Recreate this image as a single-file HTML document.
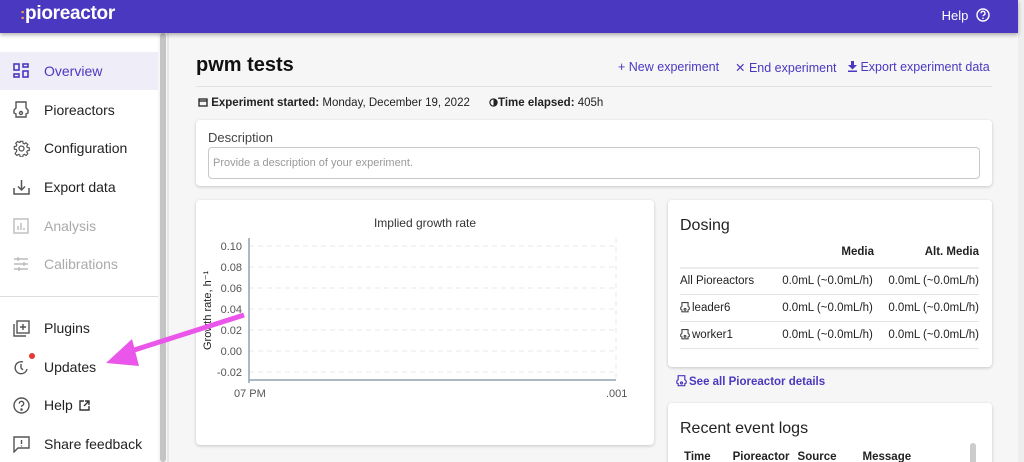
<!DOCTYPE html>
<html><head><style>
*{box-sizing:border-box;margin:0;padding:0}
html,body{width:1024px;height:462px;overflow:hidden}
body{background:#f6f6f6;font-family:"Liberation Sans",sans-serif;position:relative;color:#222}
.hdr{position:absolute;left:0;top:0;width:1018px;height:33px;background:#4b38c0;box-shadow:0 2px 4px rgba(0,0,0,.3);z-index:3}
.logo{position:absolute;left:20px;top:3px;color:#fff;font-size:19px;font-weight:bold;letter-spacing:-0.3px}
.help{position:absolute;right:28px;top:8px;color:#fff;font-size:13px}
.side{position:absolute;left:0;top:33px;width:158px;height:429px;background:#fff}
.item{position:absolute;left:0;width:158px;height:38px;display:flex;align-items:center;font-size:14px;color:#222}
.item .ic{position:absolute;left:13px}
.item span{position:absolute;left:44px}
.sb{position:absolute;left:160px;top:33px;width:6px;height:429px;background:#c4c4c4;border-radius:3px}
.dv{position:absolute;left:167px;top:33px;width:2px;height:429px;background:#e6e6e6}
.rs{position:absolute;left:1018px;top:0;width:6px;height:462px;background:#eee}
.card{position:absolute;background:#fff;border-radius:4px;box-shadow:0 1px 3px rgba(0,0,0,.2)}
.lk{color:#4b38c0;font-size:12.5px;position:absolute;top:60px}
td{font-size:11.5px;padding:0}
.pr{vertical-align:-2px;margin-right:2px}
</style></head><body>
<div class="hdr"><div class="logo"><span style="color:#f7a24a;font-size:16px">:</span>pioreactor</div>
<div class="help">Help <svg width="14" height="14" viewBox="0 0 14 14" style="vertical-align:-2px;margin-left:4px"><circle cx="7" cy="7" r="6" fill="none" stroke="#fff" stroke-width="1.4"/><path d="M5 5.3a2 2 0 1 1 2.6 1.9c-.5.2-.6.5-.6 1.1" fill="none" stroke="#fff" stroke-width="1.3"/><circle cx="7" cy="10.2" r=".8" fill="#fff"/></svg></div></div>
<div class="side">
<div class="item" style="top:19px;background:#efedf8;color:#4b38c0"><svg class="ic" width="16" height="16" viewBox="0 0 16 16" fill="none" stroke="#4b38c0" stroke-width="1.6"><rect x="1" y="1" width="5" height="6"/><rect x="10" y="1" width="5" height="3"/><rect x="1" y="11" width="5" height="3"/><rect x="10" y="8" width="5" height="6"/></svg><span>Overview</span></div>
<div class="item" style="top:58px"><svg class="ic" width="16" height="18" viewBox="0 0 16 18" fill="none" stroke="#555" stroke-width="1.4"><path d="M3 1h10v6l2 2v3l-2 1v3H3v-3l-2-1V9l2-2z"/><circle cx="8" cy="12" r="1.5"/></svg><span>Pioreactors</span></div>
<div class="item" style="top:96px"><svg class="ic" width="17" height="17" viewBox="0 0 24 24" fill="none" stroke="#555" stroke-width="1.8"><circle cx="12" cy="12" r="3.5"/><path d="M10 2h4l.5 3 2 1 2.5-1.8 2.8 2.8L20 9.5l1 2 3 .5v4l-3 .5-1 2 1.8 2.5-2.8 2.8-2.5-1.8-2 1-.5 3h-4l-.5-3-2-1-2.5 1.8-2.8-2.8L5 16.5l-1-2-3-.5v-4l3-.5 1-2L3.2 5 6 2.2 8.5 4l2-1z" transform="scale(.92) translate(1,0)"/></svg><span>Configuration</span></div>
<div class="item" style="top:135px"><svg class="ic" width="17" height="16" viewBox="0 0 17 16" fill="none" stroke="#555" stroke-width="1.5"><path d="M1 9v6h15V9M8.5 1v10M5 7.5l3.5 3.5 3.5-3.5"/></svg><span>Export data</span></div>
<div class="item" style="top:174px;color:#aaa"><svg class="ic" width="16" height="16" viewBox="0 0 16 16" fill="none" stroke="#bbb" stroke-width="1.4"><rect x="1" y="1" width="14" height="14"/><path d="M5 12V8M8 12V5M11 12v-2"/></svg><span>Analysis</span></div>
<div class="item" style="top:212px;color:#aaa"><svg class="ic" width="16" height="16" viewBox="0 0 16 16" fill="none" stroke="#bbb" stroke-width="1.4"><path d="M1 3h14M1 8h14M1 13h14M5 1v4M11 6v4M6 11v4"/></svg><span>Calibrations</span></div>
<div style="position:absolute;left:0;top:263px;width:158px;height:1px;background:#ddd"></div>
<div class="item" style="top:276px"><svg class="ic" width="17" height="17" viewBox="0 0 17 17" fill="none" stroke="#555" stroke-width="1.4"><rect x="4" y="1" width="12" height="12"/><path d="M1 4v12h12M10 4v6M7 7h6"/></svg><span>Plugins</span></div>
<div class="item" style="top:315px"><svg class="ic" width="17" height="17" viewBox="0 0 17 17" fill="none" stroke="#555" stroke-width="1.4"><path d="M14 10a6 6 0 1 1-4-7"/><path d="M8 5v4l2 2"/></svg><div style="position:absolute;left:29px;top:5px;width:6px;height:6px;border-radius:50%;background:#e53935"></div><span>Updates</span></div>
<div class="item" style="top:353px"><svg class="ic" width="17" height="17" viewBox="0 0 17 17" fill="none" stroke="#555" stroke-width="1.4"><circle cx="8.5" cy="8.5" r="7.5"/><path d="M6.3 6.6a2.2 2.2 0 1 1 2.9 2c-.5.2-.7.6-.7 1.3"/><circle cx="8.5" cy="12.5" r=".6" fill="#555"/></svg><span>Help <svg width="11" height="11" viewBox="0 0 11 11" fill="none" stroke="#333" stroke-width="1.4" style="vertical-align:-1px;margin-left:2px"><path d="M5 1H1v9h9V6M6 1h4v4M10 1L5 6"/></svg></span></div>
<div class="item" style="top:392px"><svg class="ic" width="17" height="17" viewBox="0 0 17 17" fill="none" stroke="#555" stroke-width="1.4"><path d="M1 1h15v11H5l-4 4z"/><path d="M8.5 4v4M8.5 9.5v1"/></svg><span>Share feedback</span></div>
</div>
<div class="sb"></div><div class="dv"></div><div class="rs"></div>
<div style="position:absolute;left:196px;top:54px;font-size:20px;font-weight:bold;color:#111">pwm tests</div>
<div class="lk" style="left:618px">+ New experiment</div>
<div class="lk" style="left:735px">✕ End experiment</div>
<div class="lk" style="left:848px"><svg width="9" height="11" viewBox="0 0 9 11" fill="#4b38c0" style="vertical-align:-1px"><path d="M3 0h3v4h3L4.5 8.5 0 4h3zM0 9.5h9V11H0z"/></svg> Export experiment data</div>
<div style="position:absolute;left:196px;top:86px;width:796px;height:1px;background:#e2e2e2"></div>
<div style="position:absolute;left:198px;top:97px;font-size:11.5px;color:#222"><svg width="10" height="10" viewBox="0 0 10 10" fill="none" stroke="#222" stroke-width="1.3" style="vertical-align:-1px"><rect x="1" y="2" width="8" height="7"/><path d="M1 4h8"/></svg> <b>Experiment started:</b> Monday, December 19, 2022 &nbsp; &nbsp; &nbsp;<svg width="9" height="9" viewBox="0 0 10 10" style="vertical-align:-1px"><circle cx="5" cy="5" r="4" fill="none" stroke="#222" stroke-width="1.3"/><path d="M5 1a4 4 0 0 1 0 8z" fill="#222"/></svg><b>Time elapsed:</b> 405h</div>
<div class="card" style="left:196px;top:120px;width:796px;height:66px">
<div style="position:absolute;left:12px;top:10px;font-size:13px;color:#444">Description</div>
<div style="position:absolute;left:12px;top:27px;width:772px;height:32px;border:1px solid #c8c8c8;border-radius:4px;font-size:11px;color:#999;padding:9px 4px">Provide a description of your experiment.</div></div>
<div class="card" style="left:196px;top:200px;width:458px;height:245px">
<div style="position:absolute;left:0;width:458px;top:16px;text-align:center;font-size:12px;color:#333">Implied growth rate</div>
<svg width="458" height="245" style="position:absolute;left:0;top:0" font-family="Liberation Sans" font-size="11" fill="#555">
<g stroke="#e8e8e8" stroke-dasharray="5,4"><line x1="53" y1="46" x2="420" y2="46"/><line x1="53" y1="67" x2="420" y2="67"/><line x1="53" y1="88" x2="420" y2="88"/><line x1="53" y1="109" x2="420" y2="109"/><line x1="53" y1="130" x2="420" y2="130"/><line x1="53" y1="151" x2="420" y2="151"/><line x1="53" y1="172" x2="420" y2="172"/><line x1="420" y1="38" x2="420" y2="180"/></g>
<line x1="53" y1="38" x2="53" y2="183" stroke="#90a0ad" stroke-width="1.5"/><line x1="53" y1="180" x2="420" y2="180" stroke="#90a0ad" stroke-width="1.5"/>
<g text-anchor="end"><text x="46" y="50">0.10</text><text x="46" y="71">0.08</text><text x="46" y="92">0.06</text><text x="46" y="113">0.04</text><text x="46" y="134">0.02</text><text x="46" y="155">0.00</text><text x="46" y="176">-0.02</text></g>
<text x="38" y="197">07 PM</text><text x="410" y="197">.001</text>
<text transform="translate(15,150) rotate(-90)" fill="#222">Growth rate, h⁻¹</text>
</svg></div>
<div class="card" style="left:668px;top:200px;width:324px;height:167px">
<div style="position:absolute;left:12px;top:17px;font-size:16px;color:#222">Dosing</div>
<div style="position:absolute;left:12px;top:46px;width:299px;font-size:11.5px;font-weight:bold;height:0">
<span style="position:absolute;right:105px">Media</span><span style="position:absolute;right:0">Alt. Media</span></div>
<table style="position:absolute;left:12px;top:67px;width:299px;border-collapse:collapse;border-top:2px solid #ececec">
<tr style="height:26px;border-bottom:1px solid #e4e4e4"><td>All Pioreactors</td><td style="text-align:right">0.0mL (~0.0mL/h)</td><td style="text-align:right">0.0mL (~0.0mL/h)</td></tr>
<tr style="height:27px;border-bottom:1px solid #e4e4e4"><td><svg class="pr" width="10" height="11" viewBox="0 0 16 18" fill="none" stroke="#444" stroke-width="1.8"><path d="M3 1h10v6l2 2v3l-2 1v3H3v-3l-2-1V9l2-2z"/><circle cx="8" cy="12" r="1.5"/></svg>leader6</td><td style="text-align:right">0.0mL (~0.0mL/h)</td><td style="text-align:right">0.0mL (~0.0mL/h)</td></tr>
<tr style="height:27px;border-bottom:1px solid #e4e4e4"><td><svg class="pr" width="10" height="11" viewBox="0 0 16 18" fill="none" stroke="#444" stroke-width="1.8"><path d="M3 1h10v6l2 2v3l-2 1v3H3v-3l-2-1V9l2-2z"/><circle cx="8" cy="12" r="1.5"/></svg>worker1</td><td style="text-align:right">0.0mL (~0.0mL/h)</td><td style="text-align:right">0.0mL (~0.0mL/h)</td></tr></table></div>
<div style="position:absolute;left:676px;top:375px;font-size:11.5px;color:#4b38c0;font-weight:bold"><svg class="pr" width="11" height="12" viewBox="0 0 16 18" fill="none" stroke="#4b38c0" stroke-width="1.8"><path d="M3 1h10v6l2 2v3l-2 1v3H3v-3l-2-1V9l2-2z"/><circle cx="8" cy="12" r="1.5"/></svg>See all Pioreactor details</div>
<div class="card" style="left:668px;top:403px;width:324px;height:70px">
<div style="position:absolute;left:12px;top:17px;font-size:16px;color:#222">Recent event logs</div>
<div style="position:absolute;left:16px;top:48px;font-size:11.5px;font-weight:bold">Time<span style="margin-left:22px">Pioreactor</span><span style="margin-left:8px">Source</span><span style="margin-left:26px">Message</span></div>
<div style="position:absolute;left:302px;top:40px;width:6px;height:30px;background:#ccc;border-radius:3px"></div></div>
<svg width="1024" height="462" style="position:absolute;left:0;top:0;z-index:5"><line x1="244" y1="315" x2="128" y2="352" stroke="#ea56ea" stroke-width="5"/><polygon points="106,363 132,339 139,366" fill="#ea56ea"/></svg>
</body></html>
